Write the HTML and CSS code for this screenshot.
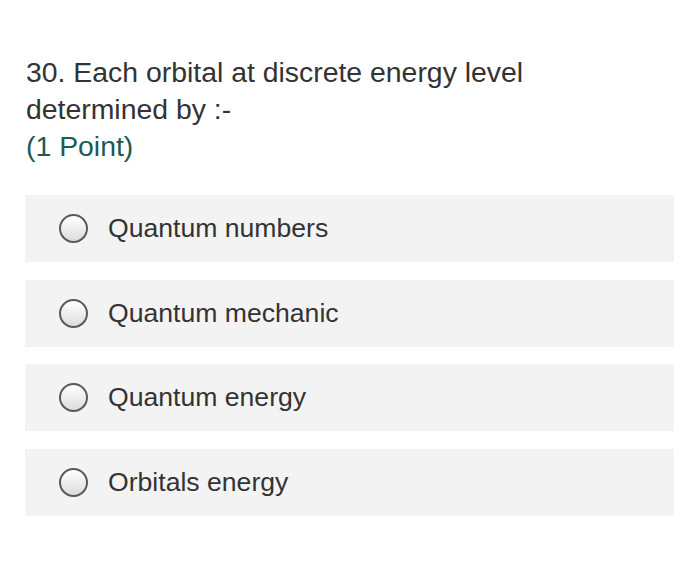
FILE: index.html
```html
<!DOCTYPE html>
<html>
<head>
<meta charset="utf-8">
<link rel="stylesheet" href="styles.css">
</head>
<body>
<div class="question">
  <div class="title">30. Each orbital at discrete energy level determined by :-</div>
  <div class="points">(1 Point)</div>
</div>
<div class="options">
  <label class="option"><span class="radio"></span><span class="label">Quantum numbers</span></label>
  <label class="option"><span class="radio"></span><span class="label">Quantum mechanic</span></label>
  <label class="option"><span class="radio"></span><span class="label">Quantum energy</span></label>
  <label class="option"><span class="radio"></span><span class="label">Orbitals energy</span></label>
</div>
</body>
</html>
```
FILE: styles.css
```css
html, body {
  margin: 0;
  padding: 0;
  background: #ffffff;
}
body {
  font-family: "Liberation Sans", Arial, sans-serif;
  color: #333333;
  width: 700px;
  height: 574px;
  overflow: hidden;
}
.question {
  padding: 54px 0 0 26px;
  font-size: 28.4px;
  line-height: 37px;
  width: 560px;
}
.points {
  color: #1d5a54;
}
.options {
  margin: 30px 0 0 25px;
  width: 649px;
  display: flex;
  flex-direction: column;
  gap: 17.5px;
}
.option {
  height: 67px;
  background: #f3f3f3;
  display: flex;
  align-items: center;
  padding-left: 34px;
}
.radio {
  width: 25px;
  height: 25px;
  border-radius: 50%;
  border: 2px solid #5a5a5a;
  background: linear-gradient(#ffffff, #dcdcdc);
  flex: none;
}
.label {
  margin-left: 20px;
  font-size: 26.6px;
  color: #333333;
}
```
